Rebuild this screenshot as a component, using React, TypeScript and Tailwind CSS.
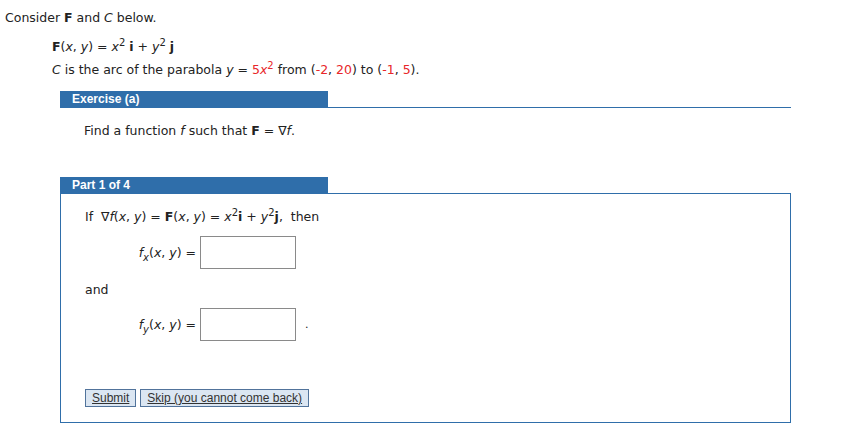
import React from "react";

function Sup({ children }: { children: React.ReactNode }) {
  return <sup className="text-[10px] relative -top-[5px] leading-none">{children}</sup>;
}

function SectionHeader({ title }: { title: string }) {
  return (
    <div className="flex items-end">
      <div className="w-[268px] h-[17px] bg-[#2f6eaa] pl-[12px] font-['Liberation_Sans',Arial,sans-serif] font-bold text-[12px] leading-[17px] text-white">
        {title}
      </div>
      <div className="w-[463px] h-px bg-[#2f6eaa]" />
    </div>
  );
}

function AnswerRow({ sub, tail }: { sub: string; tail?: boolean }) {
  return (
    <div className="flex items-center">
      <div className="w-[115px] flex justify-end pr-[4px]">
        <span>
          <i>f</i>
          <sub className="text-[10px] italic relative top-[4px]">{sub}</sub>(<i>x</i>, <i>y</i>) =
        </span>
      </div>
      <input
        type="text"
        className="w-[96px] h-[33px] border border-[#8a8a8a] bg-white outline-none"
      />
      {tail && <span className="ml-[9px] text-[11px]">.</span>}
    </div>
  );
}

export default function App() {
  return (
    <div className="w-[866px] h-[436px] bg-white text-[#222] font-['DejaVu_Sans',Verdana,sans-serif] text-[12.5px] leading-[16px] overflow-hidden">
      <div className="pt-[10px] pl-[5px]">
        Consider <b>F</b> and <i>C</i> below.
      </div>

      <div className="pl-[52px] pt-[13px]">
        <div>
          <b>F</b>(<i>x</i>, <i>y</i>) = <i>x</i><Sup>2</Sup> <b>i</b> + <i>y</i><Sup>2</Sup> <b>j</b>
        </div>
        <div className="mt-[7px]">
          <i>C</i> is the arc of the parabola <i>y</i> ={" "}
          <span className="text-[#e8262a]">
            5<i>x</i><Sup>2</Sup>
          </span>{" "}
          from (<span className="text-[#e8262a]">-2</span>, <span className="text-[#e8262a]">20</span>) to (
          <span className="text-[#e8262a]">-1</span>, <span className="text-[#e8262a]">5</span>).
        </div>
      </div>

      <div className="pl-[60px] mt-[13px]">
        <SectionHeader title="Exercise (a)" />
        <div className="pl-[24px] mt-[15px]">
          Find a function <i>f</i> such that <b>F</b> = ∇<i>f</i>.
        </div>

        <div className="mt-[38px]">
          <SectionHeader title="Part 1 of 4" />
          <div className="w-[731px] h-[229px] border border-t-0 border-[#2f6eaa] pl-[24px] pt-[15px]">
            <div>
              If&nbsp; ∇<i>f</i>(<i>x</i>, <i>y</i>) = <b>F</b>(<i>x</i>, <i>y</i>) = <i>x</i><Sup>2</Sup><b>i</b> + <i>y</i><Sup>2</Sup><b>j</b>,&nbsp; then
            </div>
            <div className="mt-[11px]">
              <AnswerRow sub="x" />
            </div>
            <div className="mt-[13px]">and</div>
            <div className="mt-[10px]">
              <AnswerRow sub="y" tail />
            </div>
            <div className="mt-[48px] flex gap-[4px] font-['Liberation_Sans',Arial,sans-serif] text-[12px]">
              <button className="h-[18px] px-[6px] bg-[#dbe6f2] border border-[#51739b] text-[#333] underline leading-[16px]">
                Submit
              </button>
              <button className="h-[18px] px-[6px] bg-[#dbe6f2] border border-[#51739b] text-[#333] underline leading-[16px]">
                Skip (you cannot come back)
              </button>
            </div>
          </div>
        </div>
      </div>
    </div>
  );
}
